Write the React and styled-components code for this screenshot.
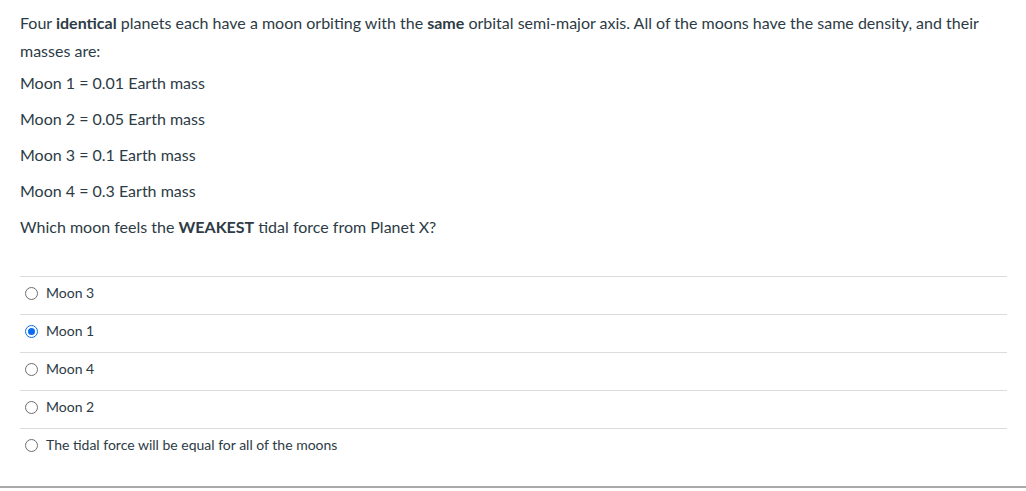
import React from "react";
import styled, { createGlobalStyle } from "styled-components";

const Global = createGlobalStyle`
  html, body { margin: 0; padding: 0; background: #fff; }
  body { font-family: Lato, "Noto Sans", sans-serif; color: #2d3b45; }
`;

const Page = styled.div`
  width: 1026px;
  height: 491px;
  box-sizing: border-box;
  display: flex;
  flex-direction: column;
`;

const Question = styled.div`
  padding: 9px 20px 0 20px;
  font-size: 16px;
`;

const Lead = styled.p`
  margin: 0 0 6px;
  line-height: 28px;
`;

const Para = styled.p`
  margin: 0 0 12px;
  line-height: 24px;
`;

const Answers = styled.div`
  margin: 25px 19px 0 20px;
  display: flex;
  flex-direction: column;
`;

const Row = styled.label`
  display: flex;
  align-items: center;
  gap: 8px;
  height: 31px;
  box-sizing: content-box;
  border-top: 1px solid #dcdcdc;
  padding: 0 0 6px 5px;
  font-size: 14px;
  line-height: 16px;
`;

const Radio = styled.span`
  width: 11px;
  height: 11px;
  margin-top: 2px;
  border-radius: 50%;
  border: 1px solid ${(p) => (p.$checked ? "#0a6cf0" : "#6d6d6d")};
  display: flex;
  align-items: center;
  justify-content: center;
  flex: none;
  &::after {
    content: "";
    width: 7px;
    height: 7px;
    border-radius: 50%;
    background: ${(p) => (p.$checked ? "#0a6cf0" : "transparent")};
  }
`;

const Footer = styled.div`
  margin-top: auto;
  height: 2px;
  margin-bottom: 3px;
  background: #a9a9a9;
`;

const answers = [
  { t: "Moon 3" },
  { t: "Moon 1", c: true },
  { t: "Moon 4" },
  { t: "Moon 2" },
  { t: "The tidal force will be equal for all of the moons" },
];

export default function App() {
  return (
    <Page>
      <Global />
      <Question>
        <Lead>
          Four <b>identical</b> planets each have a moon orbiting with the <b>same</b> orbital semi-major axis. All of the moons have the same density, and their masses are:
        </Lead>
        <Para>Moon 1 = 0.01 Earth mass</Para>
        <Para>Moon 2 = 0.05 Earth mass</Para>
        <Para>Moon 3 = 0.1 Earth mass</Para>
        <Para>Moon 4 = 0.3 Earth mass</Para>
        <Para>
          Which moon feels the <b>WEAKEST</b> tidal force from Planet X?
        </Para>
      </Question>
      <Answers>
        {answers.map((a) => (
          <Row key={a.t}>
            <Radio $checked={a.c} />
            {a.t}
          </Row>
        ))}
      </Answers>
      <Footer />
    </Page>
  );
}
